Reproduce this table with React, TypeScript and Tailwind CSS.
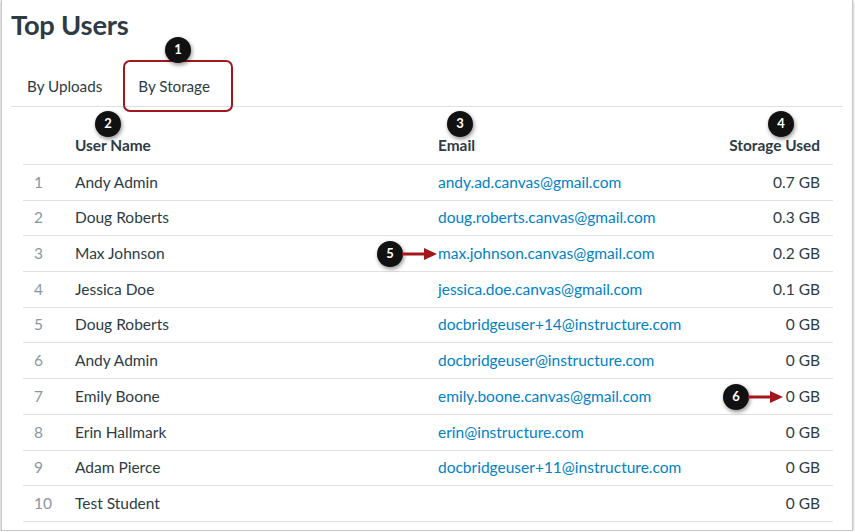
import React from 'react';

type Row = { name: string; email?: string; storage: string };

const rows: Row[] = [
  { name: 'Andy Admin', email: 'andy.ad.canvas@gmail.com', storage: '0.7 GB' },
  { name: 'Doug Roberts', email: 'doug.roberts.canvas@gmail.com', storage: '0.3 GB' },
  { name: 'Max Johnson', email: 'max.johnson.canvas@gmail.com', storage: '0.2 GB' },
  { name: 'Jessica Doe', email: 'jessica.doe.canvas@gmail.com', storage: '0.1 GB' },
  { name: 'Doug Roberts', email: 'docbridgeuser+14@instructure.com', storage: '0 GB' },
  { name: 'Andy Admin', email: 'docbridgeuser@instructure.com', storage: '0 GB' },
  { name: 'Emily Boone', email: 'emily.boone.canvas@gmail.com', storage: '0 GB' },
  { name: 'Erin Hallmark', email: 'erin@instructure.com', storage: '0 GB' },
  { name: 'Adam Pierce', email: 'docbridgeuser+11@instructure.com', storage: '0 GB' },
  { name: 'Test Student', storage: '0 GB' },
];

function Badge({ n, className }: { n: number; className: string }) {
  return (
    <div
      className={`absolute flex h-[26px] w-[26px] items-center justify-center rounded-full bg-[#111] text-[13px] font-bold text-white shadow-[1px_2px_4px_rgba(0,0,0,0.45)] ${className}`}
    >
      {n}
    </div>
  );
}

function Arrow({ className }: { className: string }) {
  return (
    <svg className={`absolute ${className}`} width="36" height="14" viewBox="0 0 36 14">
      <rect x="0" y="5.5" width="24" height="3" fill="#a2171d" />
      <polygon points="22,1 35,7 22,13" fill="#a2171d" />
    </svg>
  );
}

export default function App() {
  return (
    <div className="relative ml-px h-[531px] w-[852px] overflow-hidden border-x border-b border-[#c9c9c9] bg-white font-['Lato','Liberation_Sans',sans-serif] text-[#2d3b45] shadow-[0_1px_3px_rgba(0,0,0,0.35)]">
      <div className="px-[9px]">
        <h1 className="pt-[8px] text-[27.3px] font-bold leading-[34px] tracking-[-0.2px]">Top Users</h1>

        <div className="mt-[17px] flex h-[48px] items-center border-b border-[#dde1e4] pt-[8px] text-[15.2px]">
          <div className="pl-[16px]">By Uploads</div>
          <div className="pl-[36px]">By Storage</div>
        </div>

        <div className="ml-[12px] mr-[10px]">
          <div className="grid h-[58px] grid-cols-[52px_363px_1fr_auto] items-end border-b border-[#dde1e4] pb-[7px] text-[15.4px] font-bold">
            <div />
            <div>User Name</div>
            <div>Email</div>
            <div className="pr-[13px]">Storage Used</div>
          </div>
          {rows.map((r, i) => (
            <div
              key={i}
              className="grid h-[35.7px] grid-cols-[52px_363px_1fr_auto] items-center border-b border-[#dde1e4] text-[15.5px]"
            >
              <div className="pl-[11px] text-[#8b969e]">{i + 1}</div>
              <div>{r.name}</div>
              <div className="text-[#0081c6]">{r.email}</div>
              <div className="pr-[13px] text-right">{r.storage}</div>
            </div>
          ))}
        </div>
      </div>

      <div className="absolute left-[121px] top-[60px] h-[52px] w-[110px] rounded-[7px] border-[2.5px] border-[#a2171d]" />

      <Badge n={1} className="left-[163px] top-[37px]" />
      <Badge n={2} className="left-[93px] top-[111px]" />
      <Badge n={3} className="left-[445px] top-[111px]" />
      <Badge n={4} className="left-[766px] top-[111px]" />
      <Badge n={5} className="left-[375px] top-[241px]" />
      <Arrow className="left-[400px] top-[247px]" />
      <Badge n={6} className="left-[721px] top-[384px]" />
      <Arrow className="left-[746px] top-[390px]" />
    </div>
  );
}
